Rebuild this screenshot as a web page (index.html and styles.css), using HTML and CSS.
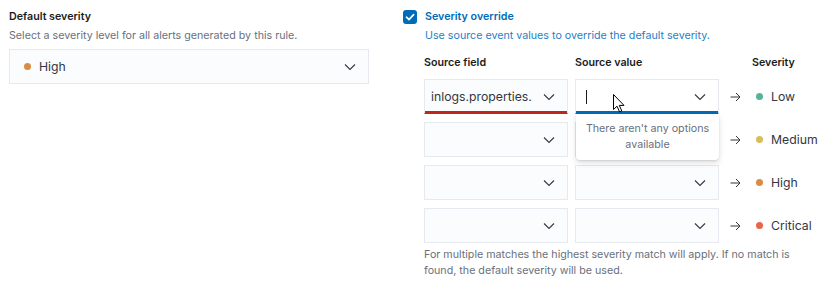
FILE: index.html
```html
<!DOCTYPE html>
<html>
<head>
<meta charset="utf-8">
<link rel="stylesheet" href="styles.css">
</head>
<body>
<div class="page">
  <section class="col-left">
    <div class="label">Default severity</div>
    <div class="help">Select a severity level for all alerts generated by this rule.</div>
    <div class="select big">
      <span class="dot high"></span><span class="sel-text">High</span>
      <svg class="chev" width="12" height="8" viewBox="0 0 12 8"><path d="M1 1.5 L6 6.5 L11 1.5" fill="none" stroke="#343741" stroke-width="1.1"/></svg>
    </div>
  </section>
  <section class="col-right">
    <div class="check-row">
      <span class="checkbox"><svg width="14" height="14" viewBox="0 0 14 14"><path d="M3.5 7.2 L6 9.6 L10.6 4.6" fill="none" stroke="#fff" stroke-width="1.6" stroke-linecap="round" stroke-linejoin="round"/></svg></span>
      <span class="check-label">Severity override</span>
    </div>
    <div class="help blue">Use source event values to override the default severity.</div>
    <div class="grid">
      <div class="head">Source field</div>
      <div class="head">Source value</div>
      <div class="head"></div>
      <div class="head">Severity</div>

      <div class="select invalid"><span class="sel-text">inlogs.properties.</span>
        <svg class="chev" width="12" height="8" viewBox="0 0 12 8"><path d="M1 1.5 L6 6.5 L11 1.5" fill="none" stroke="#343741" stroke-width="1.1"/></svg></div>
      <div class="select focused anchor"><span class="caret"></span>
        <svg class="chev" width="12" height="8" viewBox="0 0 12 8"><path d="M1 1.5 L6 6.5 L11 1.5" fill="none" stroke="#343741" stroke-width="1.1"/></svg>
        <div class="popover">There aren't any options available</div>
        <svg class="pointer" width="13" height="19" viewBox="0 0 13 19"><path d="M0.5 0.5 L0.5 15.5 L4 12.2 L6.6 18 L8.8 17 L6.3 11.4 L11 11.4 Z" fill="#fff" stroke="#000" stroke-width="1" stroke-linejoin="round"/></svg>
      </div>
      <div class="arrow"><svg width="11" height="10" viewBox="0 0 11 10"><path d="M0.5 5 H10 M6 1 L10 5 L6 9" fill="none" stroke="#343741" stroke-width="1"/></svg></div>
      <div class="sev"><span class="dot low"></span>Low</div>

      <div class="select"><svg class="chev" width="12" height="8" viewBox="0 0 12 8"><path d="M1 1.5 L6 6.5 L11 1.5" fill="none" stroke="#343741" stroke-width="1.1"/></svg></div>
      <div class="select"><svg class="chev" width="12" height="8" viewBox="0 0 12 8"><path d="M1 1.5 L6 6.5 L11 1.5" fill="none" stroke="#343741" stroke-width="1.1"/></svg></div>
      <div class="arrow"><svg width="11" height="10" viewBox="0 0 11 10"><path d="M0.5 5 H10 M6 1 L10 5 L6 9" fill="none" stroke="#343741" stroke-width="1"/></svg></div>
      <div class="sev"><span class="dot medium"></span>Medium</div>

      <div class="select"><svg class="chev" width="12" height="8" viewBox="0 0 12 8"><path d="M1 1.5 L6 6.5 L11 1.5" fill="none" stroke="#343741" stroke-width="1.1"/></svg></div>
      <div class="select"><svg class="chev" width="12" height="8" viewBox="0 0 12 8"><path d="M1 1.5 L6 6.5 L11 1.5" fill="none" stroke="#343741" stroke-width="1.1"/></svg></div>
      <div class="arrow"><svg width="11" height="10" viewBox="0 0 11 10"><path d="M0.5 5 H10 M6 1 L10 5 L6 9" fill="none" stroke="#343741" stroke-width="1"/></svg></div>
      <div class="sev"><span class="dot high"></span>High</div>

      <div class="select"><svg class="chev" width="12" height="8" viewBox="0 0 12 8"><path d="M1 1.5 L6 6.5 L11 1.5" fill="none" stroke="#343741" stroke-width="1.1"/></svg></div>
      <div class="select"><svg class="chev" width="12" height="8" viewBox="0 0 12 8"><path d="M1 1.5 L6 6.5 L11 1.5" fill="none" stroke="#343741" stroke-width="1.1"/></svg></div>
      <div class="arrow"><svg width="11" height="10" viewBox="0 0 11 10"><path d="M0.5 5 H10 M6 1 L10 5 L6 9" fill="none" stroke="#343741" stroke-width="1"/></svg></div>
      <div class="sev"><span class="dot critical"></span>Critical</div>
    </div>
    <div class="help footer">For multiple matches the highest severity match will apply. If no match is found, the default severity will be used.</div>
  </section>
</div>
</body>
</html>
```
FILE: styles.css
```css
* { box-sizing: border-box; }
body {
  margin: 0;
  background: #fff;
  font-family: Inter, "Noto Sans", sans-serif;
  color: #343741;
}
.page {
  display: flex;
  gap: 34px;
  padding: 9px 0 0 9px;
}
.col-left { width: 360px; }
.col-right { width: 400px; }
.label {
  font-size: 10.7px;
  font-weight: 600;
  line-height: 16px;
  color: #1a1c21;
}
.help {
  font-size: 10.7px;
  line-height: 16px;
  color: #69707d;
  margin-top: 3px;
}
.help.blue { color: #1f80c6; padding-left: 22px; }
.select {
  position: relative;
  display: flex;
  align-items: center;
  height: 35px;
  background: #fbfcfd;
  border: 1px solid #e6e9ef;
  padding: 0 12px 0 6px;
  font-size: 12.25px;
}
.select.big { margin-top: 5px; padding-left: 14px; }
.sel-text { flex: 1; white-space: nowrap; overflow: hidden; }
.chev { margin-left: auto; flex: none; }
.dot {
  display: inline-block;
  width: 7px;
  height: 7px;
  border-radius: 50%;
  margin-right: 8px;
  flex: none;
}
.dot.low { background: #54b399; }
.dot.medium { background: #d6bf57; }
.dot.high { background: #da8b45; }
.dot.critical { background: #e7664c; }
.check-row {
  display: flex;
  align-items: center;
  gap: 8px;
  height: 16px;
}
.checkbox {
  width: 14px;
  height: 14px;
  border-radius: 3px;
  background: #006bb8;
  display: flex;
}
.check-label {
  font-size: 10.7px;
  font-weight: 600;
  color: #006bb8;
  line-height: 16px;
}
.grid {
  display: grid;
  grid-template-columns: 144px 144px 19px auto;
  column-gap: 7px;
  row-gap: 8px;
  margin-top: 11px;
  padding-left: 21px;
}
.head {
  font-size: 10.7px;
  font-weight: 600;
  line-height: 16px;
  color: #1a1c21;
}
.select.invalid { box-shadow: inset 0 -2px 0 #bd271e; border-bottom-color: #bd271e; }
.select.focused { box-shadow: inset 0 -2px 0 #006bb8; border-bottom-color: #006bb8; background: #fff; }
.caret {
  width: 1px;
  height: 14px;
  background: #1a1c21;
  margin-left: 4px;
}
.arrow { display: flex; align-items: center; justify-content: center; }
.sev {
  display: flex;
  align-items: center;
  padding-left: 4px;
  font-size: 12.25px;
}
.popover {
  position: absolute;
  left: 0;
  top: 34px;
  width: 143px;
  padding: 7px 8px 7px;
  background: #fff;
  border-radius: 0 0 4px 4px;
  box-shadow: 0 3px 6px rgba(0,0,0,0.12), 0 1px 2px rgba(0,0,0,0.1);
  font-size: 10.7px;
  line-height: 16px;
  color: #69707d;
  text-align: center;
  z-index: 5;
}
.pointer {
  position: absolute;
  left: 37px;
  top: 14px;
  z-index: 6;
}
.footer { margin-top: 4px; padding-left: 21px; width: 400px; }
```
